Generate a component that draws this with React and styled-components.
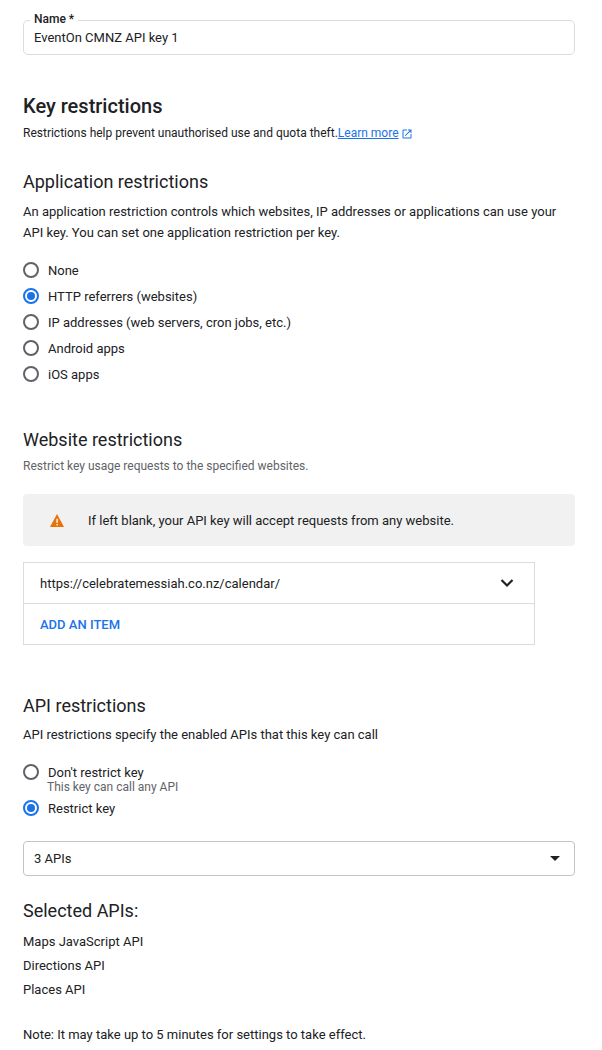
import styled, { createGlobalStyle } from 'styled-components';

const Global = createGlobalStyle`
  body { margin: 0; font-family: Roboto, "Liberation Sans", sans-serif; color: #202124; background: #fff; }
`;

const Page = styled.div`
  padding: 20px 27px 0 23px;
  display: flex;
  flex-direction: column;
`;

const Field = styled.div`
  position: relative;
  height: 35px;
  border: 1px solid #dadce0;
  border-radius: 5px;
  display: flex;
  align-items: center;
  padding: 0 10px;
  font-size: 13px;
  box-sizing: border-box;
`;

const FieldLabel = styled.span`
  position: absolute;
  top: -9px;
  left: 6px;
  padding: 0 4px;
  background: #fff;
  font-size: 12px;
  font-weight: 500;
  line-height: 14px;
`;

const H2 = styled.h2`
  margin: ${p => p.$mt}px 0 0;
  font-size: ${p => p.$size || 18}px;
  font-weight: ${p => (p.$size === 20 ? 500 : 400)};
  line-height: 24px;
`;

const Text = styled.p`
  margin: ${p => p.$mt || 0}px 0 0;
  font-size: ${p => p.$size || 13}px;
  line-height: ${p => p.$lh || 21}px;
  color: ${p => p.$muted ? '#5f6368' : '#202124'};
`;

const Link = styled.a`
  color: #1a73e8;
  text-decoration: underline;
  display: inline-flex;
  align-items: center;
  gap: 2px;
`;

const RadioList = styled.div`
  margin-top: ${p => p.$mt}px;
  display: flex;
  flex-direction: column;
`;

const RadioRow = styled.label`
  display: flex;
  align-items: center;
  gap: 9px;
  height: 26px;
  font-size: 13px;
`;

const Circle = styled.span`
  width: 16px;
  height: 16px;
  box-sizing: border-box;
  border-radius: 50%;
  border: 2px solid ${p => (p.$on ? '#1a73e8' : '#5f6368')};
  display: flex;
  align-items: center;
  justify-content: center;
  &::after {
    content: '';
    width: 8px;
    height: 8px;
    border-radius: 50%;
    background: ${p => (p.$on ? '#1a73e8' : 'transparent')};
  }
`;

const Helper = styled.div`
  font-size: 12px;
  color: #5f6368;
  margin: -6px 0 0 24px;
  line-height: 16px;
`;

const Warning = styled.div`
  margin-top: 17px;
  height: 52px;
  background: #f1f1f1;
  border-radius: 4px;
  display: flex;
  align-items: center;
  gap: 24px;
  padding-left: 27px;
  font-size: 13px;
`;

const ListBox = styled.div`
  margin-top: 16px;
  width: 512px;
  border: 1px solid #dadce0;
  box-sizing: border-box;
`;

const ListRow = styled.div`
  height: 40px;
  display: flex;
  align-items: center;
  justify-content: space-between;
  padding: 0 20px 0 16px;
  font-size: 13px;
  border-top: ${p => (p.$first ? 'none' : '1px solid #dadce0')};
  color: ${p => (p.$action ? '#1a73e8' : '#202124')};
  font-weight: ${p => (p.$action ? 500 : 400)};
`;

const Select = styled.div`
  margin-top: 20px;
  height: 35px;
  border: 1px solid #c4c4c4;
  border-radius: 4px;
  box-sizing: border-box;
  display: flex;
  align-items: center;
  justify-content: space-between;
  padding: 0 14px 0 10px;
  font-size: 13px;
`;

const Caret = styled.span`
  width: 0;
  height: 0;
  border-left: 5px solid transparent;
  border-right: 5px solid transparent;
  border-top: 5px solid #202124;
`;

const Radio = ({ on, children }) => (
  <RadioRow>
    <Circle $on={on} />
    {children}
  </RadioRow>
);

export default function App() {
  return (
    <Page>
      <Global />
      <Field>
        <FieldLabel>Name *</FieldLabel>
        EventOn CMNZ API key 1
      </Field>

      <H2 $mt={39} $size={20}>Key restrictions</H2>
      <Text $mt={5} $size={12}>
        Restrictions help prevent unauthorised use and quota theft.
        <Link>
          Learn more
          <svg width="12" height="12" viewBox="0 0 24 24" fill="#1a73e8">
            <path d="M19 19H5V5h7V3H5a2 2 0 0 0-2 2v14a2 2 0 0 0 2 2h14c1.1 0 2-.9 2-2v-7h-2v7zM14 3v2h3.59l-9.83 9.83 1.41 1.41L19 6.41V10h2V3h-7z" />
          </svg>
        </Link>
      </Text>

      <H2 $mt={26}>Application restrictions</H2>
      <Text $mt={7}>
        An application restriction controls which websites, IP addresses or applications can use your
        API key. You can set one application restriction per key.
      </Text>
      <RadioList $mt={14}>
        <Radio>None</Radio>
        <Radio on>HTTP referrers (websites)</Radio>
        <Radio>IP addresses (web servers, cron jobs, etc.)</Radio>
        <Radio>Android apps</Radio>
        <Radio>iOS apps</Radio>
      </RadioList>

      <H2 $mt={41}>Website restrictions</H2>
      <Text $mt={4} $size={12} $muted>Restrict key usage requests to the specified websites.</Text>
      <Warning>
        <svg width="14" height="13" viewBox="0 0 24 22">
          <path d="M12 0L24 22H0z" fill="#e8710a" />
          <rect x="11" y="8" width="2.4" height="7" fill="#fff" />
          <rect x="11" y="17" width="2.4" height="2.4" fill="#fff" />
        </svg>
        If left blank, your API key will accept requests from any website.
      </Warning>
      <ListBox>
        <ListRow $first>
          https://celebratemessiah.co.nz/calendar/
          <svg width="14" height="10" viewBox="0 0 14 10">
            <path d="M1.5 2l5.5 5.5L12.5 2" stroke="#202124" strokeWidth="2.2" fill="none" />
          </svg>
        </ListRow>
        <ListRow $action>ADD AN ITEM</ListRow>
      </ListBox>

      <H2 $mt={49}>API restrictions</H2>
      <Text $mt={6}>API restrictions specify the enabled APIs that this key can call</Text>
      <RadioList $mt={14}>
        <Radio>Don't restrict key</Radio>
        <Helper>This key can call any API</Helper>
        <Radio on>Restrict key</Radio>
      </RadioList>
      <Select>
        3 APIs
        <Caret />
      </Select>

      <H2 $mt={23}>Selected APIs:</H2>
      <Text $mt={7} $lh={24}>Maps JavaScript API</Text>
      <Text $lh={24}>Directions API</Text>
      <Text $lh={24}>Places API</Text>
      <Text $mt={22}>Note: It may take up to 5 minutes for settings to take effect.</Text>
    </Page>
  );
}
